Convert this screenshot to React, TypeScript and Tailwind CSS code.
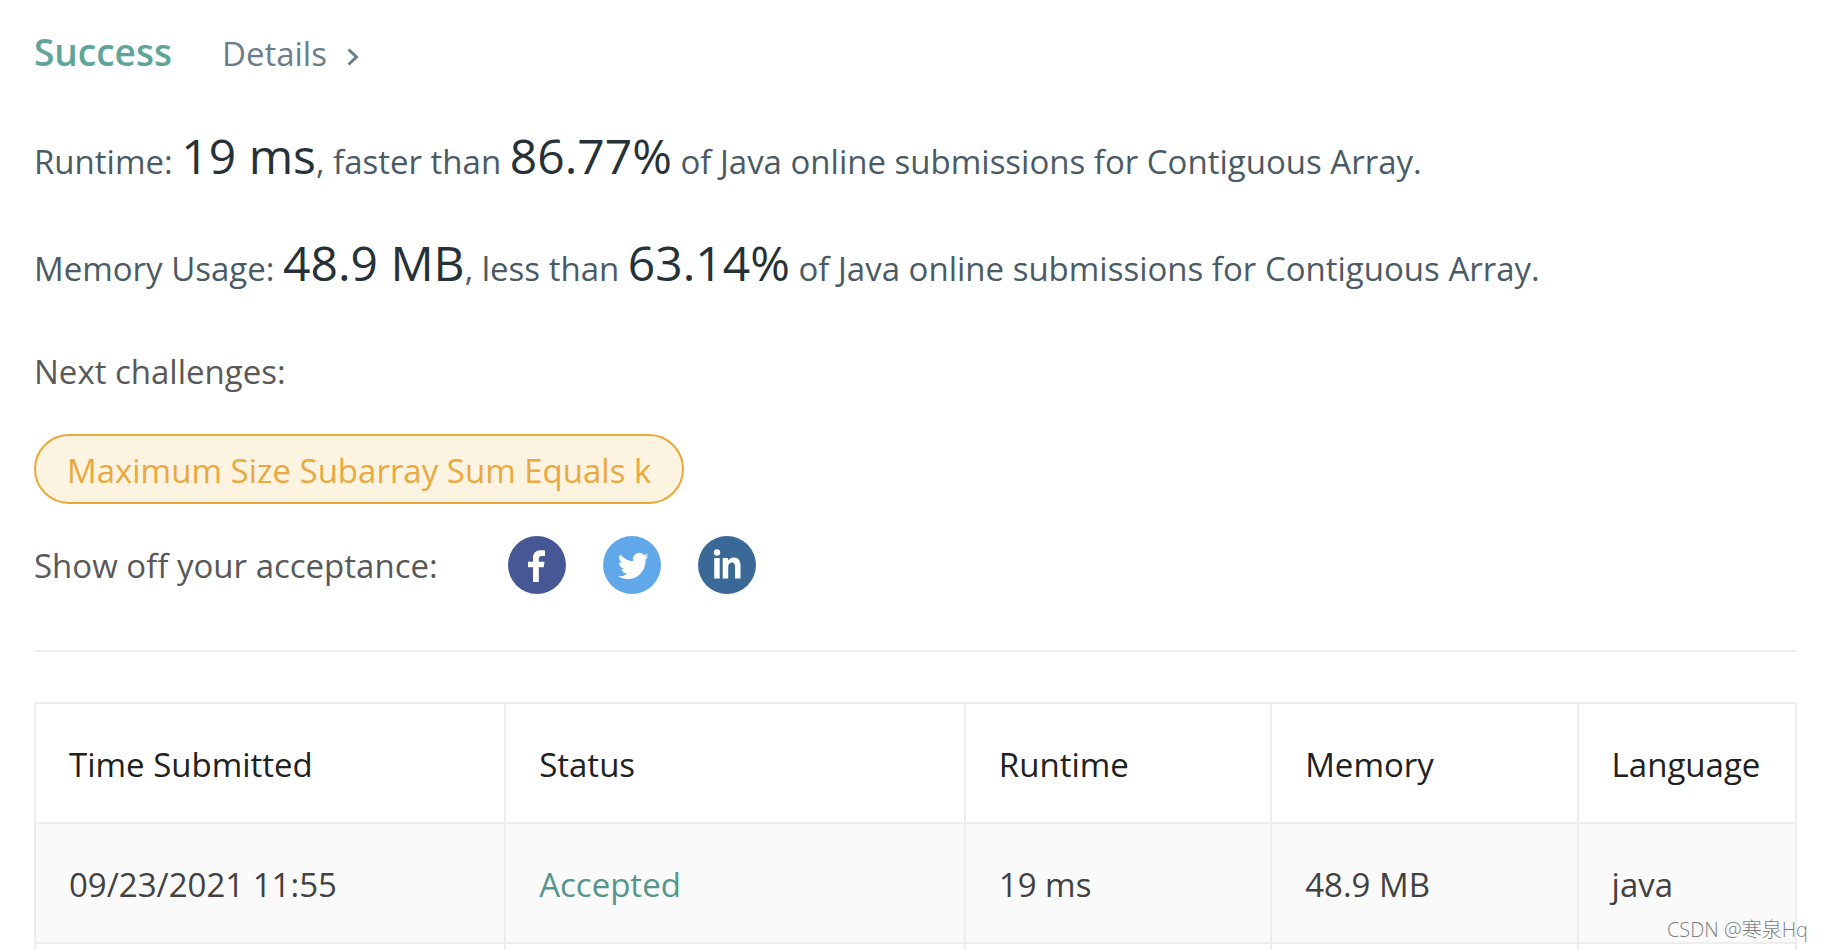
import React from 'react';

interface Submission {
  time: string;
  status: string;
  runtime: string;
  memory: string;
  language: string;
}

interface StatLineProps {
  label: string;
  value: string;
  comparison: string;
  percent: string;
}

const submissions: Submission[] = [
  { time: '09/23/2021 11:55', status: 'Accepted', runtime: '19 ms', memory: '48.9 MB', language: 'java' },
];

const StatLine: React.FC<StatLineProps> = ({ label, value, comparison, percent }) => (
  <p className="leading-[71px] text-[#4b5b65]">
    {label}: <span className="text-5xl leading-none text-[#263238]">{value}</span>, {comparison}{' '}
    <span className="text-5xl leading-none text-[#263238]">{percent}</span> of Java online submissions for
    Contiguous Array.
  </p>
);

const ShareLinks = () => (
  <div className="flex gap-[37px]">
    <a href="#facebook" aria-label="Share on Facebook">
      <svg className="size-[58px]" viewBox="0 0 58 58">
        <circle cx="29" cy="29" r="29" fill="#475795" />
        <path
          fill="#fff"
          d="M25 46V31.3h-5v-5.6h5v-3.4c0-5.200 2.800-8 7.600-8 1.600 0 3 .1 4.400.3v5.300h-2.900c-2.500 0-3.300 1.200-3.300 3.100v2.700h5.700l-.7 5.600h-5V46z"
        />
      </svg>
    </a>
    <a href="#twitter" aria-label="Share on Twitter">
      <svg className="size-[58px]" viewBox="0 0 58 58">
        <circle cx="29" cy="29" r="29" fill="#61a8ea" />
        <path
          fill="#fff"
          transform="translate(15 14) scale(1.280 1.340)"
          d="M23.950 4.570a10 10 0 0 1-2.820.770 4.960 4.960 0 0 0 2.160-2.720c-.950.550-2 .950-3.130 1.180a4.920 4.920 0 0 0-8.380 4.480C7.690 8.090 4.070 6.130 1.640 3.160a4.930 4.930 0 0 0 1.520 6.570 4.900 4.900 0 0 1-2.230-.610v.060a4.920 4.920 0 0 0 3.950 4.830 5 5 0 0 1-2.210.080 4.940 4.940 0 0 0 4.600 3.420A9.870 9.870 0 0 1 0 19.540a13.990 13.990 0 0 0 7.550 2.210c9.050 0 14-7.500 14-13.980 0-.210 0-.420-.020-.630a9.940 9.940 0 0 0 2.420-2.570z"
        />
      </svg>
    </a>
    <a href="#linkedin" aria-label="Share on LinkedIn">
      <svg className="size-[58px]" viewBox="0 0 58 58">
        <circle cx="29" cy="29" r="29" fill="#3a6897" />
        <circle cx="19" cy="16.500" r="3.200" fill="#fff" />
        <path
          fill="#fff"
          d="M16.200 22h5.500v20.500h-5.500zM24.700 22h5.200v2.800c1.200-2 3.200-3.300 5.900-3.300 4.900 0 6.700 3.300 6.700 8.200v12.800H37V31c0-2.800-.8-4.500-3-4.500-2.500 0-3.800 1.700-3.800 4.700v11.300h-5.500z"
        />
      </svg>
    </a>
  </div>
);

const SubmissionTable = () => (
  <table className="w-full table-fixed border-collapse text-left">
    <colgroup>
      <col className="w-[26.7%]" />
      <col className="w-[26.1%]" />
      <col className="w-[17.4%]" />
      <col className="w-[17.4%]" />
      <col />
    </colgroup>
    <thead>
      <tr className="h-[120px] text-[#212121]">
        {['Time Submitted', 'Status', 'Runtime', 'Memory', 'Language'].map((name) => (
          <th key={name} className="border-2 border-[#eeeeee] pl-[33px] pt-1 font-normal">{name}</th>
        ))}
      </tr>
    </thead>
    <tbody>
      {submissions.map((item) => (
        <tr key={item.time} className="h-[120px] bg-[#fafafa] text-[#424242]">
          <td className="border-2 border-[#eeeeee] pl-[33px] pt-1">{item.time}</td>
          <td className="border-2 border-[#eeeeee] pl-[33px] pt-1">
            <a href="#submission" className="text-[#55958a]">{item.status}</a>
          </td>
          <td className="border-2 border-[#eeeeee] pl-[33px] pt-1">{item.runtime}</td>
          <td className="border-2 border-[#eeeeee] pl-[33px] pt-1">{item.memory}</td>
          <td className="border-2 border-[#eeeeee] pl-[33px] pt-1">{item.language}</td>
        </tr>
      ))}
      <tr className="h-[120px]">
        <td className="border-2 border-[#eeeeee]" />
        <td className="border-2 border-[#eeeeee]" />
        <td className="border-2 border-[#eeeeee]" />
        <td className="border-2 border-[#eeeeee]" />
        <td className="border-2 border-[#eeeeee]" />
      </tr>
    </tbody>
  </table>
);

export default function App() {
  return (
    <div className="relative h-screen overflow-hidden bg-white pl-[34px] pr-[25px] pt-7 font-['Open_Sans','Noto_Sans',sans-serif] text-[33px] leading-12 text-[#595959]">
      <header className="mb-12 flex items-baseline gap-[50px]">
        <h1 className="text-[37px] font-semibold text-[#60a599]">Success</h1>
        <a href="#details" className="flex items-center gap-5 text-[#6b7d8a]">
          Details
          <svg className="mt-1.5 h-[18px] w-3" viewBox="0 0 12 18" fill="none" stroke="currentColor" strokeWidth="3">
            <path d="M1.500 1.500 9.500 9l-8 7.500" />
          </svg>
        </a>
      </header>

      <section className="mb-11 flex flex-col gap-9">
        <StatLine label="Runtime" value="19 ms" comparison="faster than" percent="86.77%" />
        <StatLine label="Memory Usage" value="48.9 MB" comparison="less than" percent="63.14%" />
      </section>

      <p className="mb-[38px]">Next challenges:</p>
      <a
        href="#challenge"
        className="flex h-[70px] w-fit items-center rounded-full border-2 border-[#e9a838] bg-[#fcf3e1] px-[31px] pt-1 text-[#e9a93f]"
      >
        Maximum Size Subarray Sum Equals k
      </a>

      <div className="mt-8 flex items-center gap-[70px]">
        <span className="pt-0.5">Show off your acceptance:</span>
        <ShareLinks />
      </div>

      <hr className="mb-[50px] mt-14 border-t-2 border-[#eeeeee]" />

      <SubmissionTable />

      <span className="absolute bottom-1.5 right-[14px] font-['Open_Sans','Noto_Sans_CJK_SC',sans-serif] text-[20px] font-light leading-7 text-[#7f7f7f]">
        CSDN @寒泉Hq
      </span>
    </div>
  );
}
